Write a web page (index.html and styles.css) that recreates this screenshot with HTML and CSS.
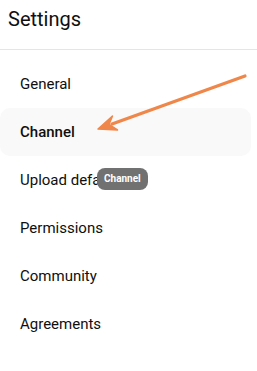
FILE: index.html
```html
<!DOCTYPE html>
<html lang="en">
    <head>
        <meta name="viewport" content="width=device-width, initial-scale=1.0">
        <title>Settings</title>
        <link rel="stylesheet" href="styles.css">
    </head>
    <body>
        <div class="settings">
            <div class="settings__header">Settings</div>
            <div class="settings__nav">
                <div class="nav-item">General</div>
                <div class="nav-item nav-item--active">Channel</div>
                <div class="nav-item">Upload defaults</div>
                <div class="nav-item">Permissions</div>
                <div class="nav-item">Community</div>
                <div class="nav-item">Agreements</div>
            </div>
            <div class="tooltip">Channel</div>
            <svg class="pointer" width="257" height="371" viewBox="0 0 257 371">
                <line x1="245" y1="76" x2="112" y2="124" stroke="#f0874a" stroke-width="3.2" stroke-linecap="round"/>
                <polygon points="98,129 112.5,116 109,124.5 117.5,130" fill="#f0874a" stroke="#f0874a" stroke-width="1.5" stroke-linejoin="round"/>
            </svg>
        </div>
    </body>
</html>
```

FILE: styles.css
```css
body {
    margin: 0;
    background: #fff;
    font-family: Roboto, "Liberation Sans", sans-serif;
    color: #0f0f0f;
}
.settings {
    position: relative;
    width: 257px;
    height: 371px;
    overflow: hidden;
}
.settings__header {
    height: 49px;
    padding-left: 8px;
    font-size: 20px;
    line-height: 38px;
    border-bottom: 1px solid #e5e5e5;
}
.settings__nav {
    padding-top: 10px;
    padding-right: 6px;
}
.nav-item {
    height: 48px;
    line-height: 48px;
    padding-left: 20px;
    font-size: 15px;
    border-radius: 10px;
}
.nav-item--active {
    background-color: #f9f9f9;
    font-weight: 500;
}
.tooltip {
    position: absolute;
    left: 97px;
    top: 168px;
    padding: 0 7px;
    height: 22px;
    line-height: 22px;
    border-radius: 8px;
    background-color: #717171;
    color: #fff;
    font-size: 10px;
    font-weight: 700;
}
.pointer {
    position: absolute;
    left: 0;
    top: 0;
}
```
